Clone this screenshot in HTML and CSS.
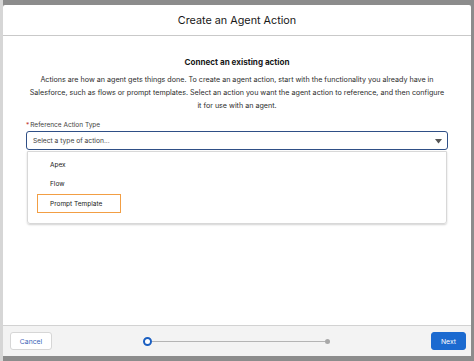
FILE: index.html
```html
<!DOCTYPE html>
<html>
<head>
<meta charset="utf-8">
<link rel="stylesheet" href="styles.css">
</head>
<body>
<div class="backdrop">
  <div class="modal">
    <header class="modal-header">
      <h1 class="title">Create an Agent Action</h1>
    </header>
    <main class="modal-body">
      <h2 class="subtitle">Connect an existing action</h2>
      <p class="intro">Actions are how an agent gets things done. To create an agent action, start with the functionality you already have in Salesforce, such as flows or prompt templates. Select an action you want the agent action to reference, and then configure it for use with an agent.</p>
      <div class="field">
        <label class="label"><span class="req">*</span>Reference Action Type</label>
        <div class="combo">
          <span class="placeholder">Select a type of action...</span>
          <svg class="caret" width="7" height="5" viewBox="0 0 7 5"><path d="M0 0 L7 0 L3.5 4.5 Z" fill="#555"/></svg>
        </div>
        <ul class="listbox">
          <li class="option">Apex</li>
          <li class="option">Flow</li>
          <li class="option highlighted">Prompt Template</li>
        </ul>
      </div>
    </main>
    <footer class="modal-footer">
      <button class="btn btn-neutral">Cancel</button>
      <div class="progress">
        <span class="step current"></span>
        <span class="track"></span>
        <span class="step"></span>
      </div>
      <button class="btn btn-brand">Next</button>
    </footer>
  </div>
</div>
</body>
</html>
```
FILE: styles.css
```css
* { box-sizing: border-box; }
html, body { margin: 0; padding: 0; }
body {
  width: 474px;
  height: 361px;
  overflow: hidden;
  font-family: "Inter", "Liberation Sans", Arial, sans-serif;
  color: #181818;
}
.backdrop {
  width: 474px;
  height: 361px;
  background: linear-gradient(to right, #d6d6d6 0, #d6d6d6 3px, #8c8c8c 3px);
  padding: 5px 3px 5px 3px;
  display: flex;
}
.modal {
  flex: 1;
  background: #fff;
  display: flex;
  flex-direction: column;
  border-radius: 2px 2px 0 0;
}
.modal-header {
  height: 31px;
  border-bottom: 1px solid #c9c9c9;
  display: flex;
  align-items: center;
  justify-content: center;
}
.title {
  margin: 0;
  font-size: 10.8px;
  font-weight: 400;
  color: #181818;
}
.modal-body {
  flex: 1;
  padding: 21px 23px 0 23px;
}
.subtitle {
  margin: 0;
  text-align: center;
  font-size: 8.1px;
  font-weight: 700;
  color: #181818;
}
.intro {
  margin: 6px 2px 0;
  text-align: center;
  font-size: 7.15px;
  line-height: 13px;
  color: #2b2b2b;
}
.field { margin-top: 9px; }
.label {
  display: block;
  font-size: 6.5px;
  color: #3e3e3c;
  margin-bottom: 2px;
}
.req { color: #c23934; margin-right: 1px; }
.combo {
  height: 19px;
  border: 1.5px solid #2f4f86;
  border-radius: 3px;
  display: flex;
  align-items: center;
  justify-content: space-between;
  padding: 0 5px 0 6px;
}
.placeholder { font-size: 6.7px; color: #3e3e3c; }
.caret { margin-top: 1px; }
.listbox {
  list-style: none;
  margin: 1px 1px 0;
  padding: 3px 0 2px;
  border: 1px solid #d8d8d8;
  border-radius: 0 0 3px 3px;
  box-shadow: 0 1px 2px rgba(0,0,0,0.18);
  height: 73px;
}
.option {
  font-size: 6.5px;
  color: #181818;
  height: 19.5px;
  display: flex;
  align-items: center;
  padding-left: 22px;
}
.option.highlighted {
  margin-left: 9px;
  padding-left: 12px;
  width: 84px;
  border: 1.5px solid #f29e44;
  height: 19px;
}
.modal-footer {
  height: 31px;
  background: #f3f3f3;
  border-top: 1px solid #d2d2d2;
  display: flex;
  align-items: center;
  padding: 0 5px 0 7px;
}
.btn {
  font-family: inherit;
  font-size: 6.8px;
  height: 18px;
  border-radius: 3px;
  padding: 0;
}
.btn-neutral {
  width: 42px;
  background: #fff;
  border: 1px solid #d6d6d6;
  color: #3a64b7;
}
.btn-brand {
  width: 35px;
  background: #1b6ad0;
  border: 1px solid #1b6ad0;
  color: #fff;
}
.progress {
  flex: 1;
  display: flex;
  align-items: center;
  margin: 0 101px 0 91px;
}
.step {
  width: 5px;
  height: 5px;
  border-radius: 50%;
  background: #a8a8a8;
  flex: none;
}
.step.current {
  width: 9px;
  height: 9px;
  background: #fff;
  border: 2px solid #1b5fc1;
}
.track {
  flex: 1;
  height: 1px;
  background: #b4b4b4;
}
```
